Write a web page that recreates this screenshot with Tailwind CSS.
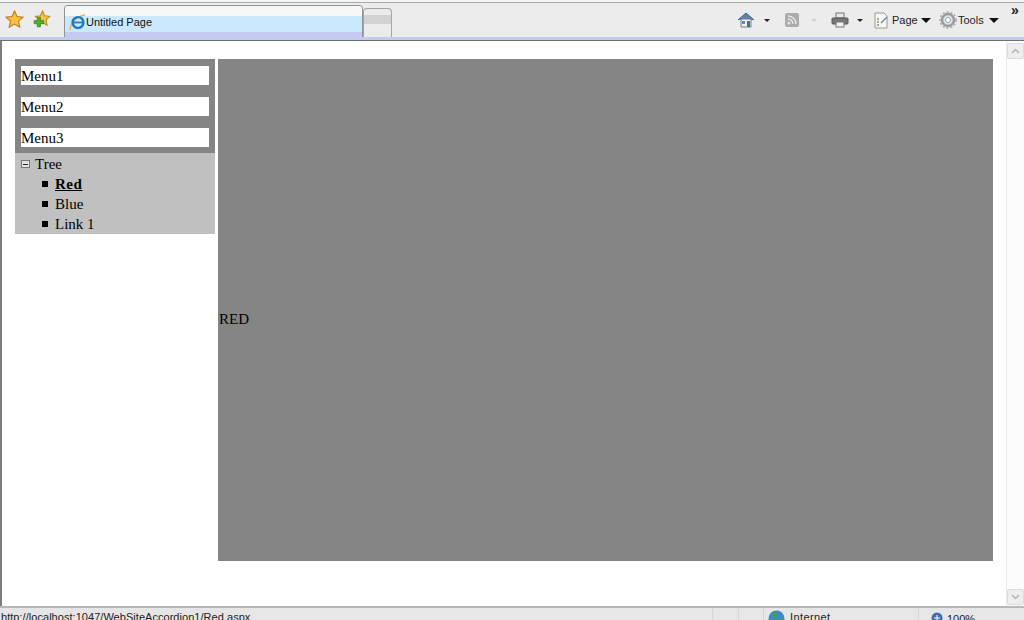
<!DOCTYPE html>
<html lang="en">
<head>
    <meta charset="UTF-8">
    <title>Untitled Page</title>
    <script src="https://cdn.jsdelivr.net/npm/@tailwindcss/browser@4"></script>
</head>
<body class="h-[620px] w-[1024px] overflow-hidden flex flex-col bg-white font-['Liberation_Serif',serif] text-black">

    <!-- browser toolbar -->
    <div class="h-[40px] shrink-0 flex flex-col bg-[#ececec]">
        <div class="h-[2px] bg-[#f4f4f4]"></div>
        <div class="h-[1px] bg-[#a8aca8]"></div>
        <div class="flex-1 flex items-end relative font-['Liberation_Sans',sans-serif] text-[11px]">
            <div class="flex items-center gap-[8px] pl-[5px] self-start mt-[7px] w-[64px]">
                <svg width="19" height="19" viewBox="0 0 18 18"><path d="M9 1l2.400 5.200 5.600.6-4.200 3.800 1.200 5.600L9 13.400l-5 2.800 1.200-5.600L1 6.800l5.600-.6z" fill="#f7c23c" stroke="#b9791c"/></svg>
                <svg width="19" height="19" viewBox="0 0 18 18"><path d="M10 1l2 4.500 5 .5-3.700 3.400 1 5-4.300-2.500-4 2.400 1-5L3.300 6l4.700-.5z" fill="#f2c548" stroke="#b9891c"/><path d="M5 7h3v3h3v3H8v3H5v-3H2v-3h3z" fill="#4fae2c" stroke="#2d7a18" stroke-width=".6"/></svg>
            </div>
            <div class="w-[299px] h-[32px] rounded-t-[4px] border border-b-0 border-[#8d9296] bg-white flex flex-col overflow-hidden">
                <div class="h-[10px] bg-[#f6f8f8]"></div>
                <div class="h-[16px] bg-[#cbe9fd] relative">
                    <span class="absolute left-[21px] top-[-2px] text-[11px] leading-[17px] text-[#101010]">Untitled Page</span>
                </div>
                <div class="flex-1 bg-[#c8c8f4]"></div>
            </div>
            <svg class="absolute left-[69px] top-[11px]" width="17" height="17" viewBox="0 0 17 17"><path d="M1 16C1 10 8 2 16 1" fill="none" stroke="#e8b040" stroke-width="1.400"/><circle cx="9" cy="8.500" r="5.400" fill="none" stroke="#1e78c8" stroke-width="2.400"/><path d="M4 8.500h10" stroke="#1e78c8" stroke-width="1.800"/></svg>
            <div class="w-[29px] h-[29px] rounded-t-[4px] border border-b-0 border-[#a3a6a6] bg-[#ebebeb] flex flex-col">
                <div class="mt-[6px] h-[9px] bg-[#d2d2d2]"></div>
            </div>
            <div class="ml-auto self-start mt-[8px] flex items-center text-[11px] text-[#222] pr-[4px] h-[18px]">
                <svg width="18" height="18" viewBox="0 0 18 18"><path d="M1 9l8-7 8 7" fill="#5a82b8" stroke="#3b5e94"/><path d="M4 8h10v8H4z" fill="#f2efe4" stroke="#7d7d70"/><path d="M10 10h3v6h-3z" fill="#3c70b0"/><path d="M5 10h3v3H5z" fill="#5b8cc4"/></svg>
                <span class="ml-[9px] border-x-[3px] border-t-[3px] border-x-transparent border-t-[#222]"></span>
                <svg class="ml-[15px]" width="14" height="14" viewBox="0 0 14 14"><rect width="14" height="14" rx="2" fill="#a9aca9"/><circle cx="4" cy="10" r="1.500" fill="#e6e6e6"/><path d="M3 6a5 5 0 015 5M3 3a8 8 0 018 8" fill="none" stroke="#e6e6e6" stroke-width="1.400"/></svg>
                <span class="ml-[12px] border-x-[3px] border-t-[3px] border-x-transparent border-t-[#d0d0d0]"></span>
                <svg class="ml-[14px]" width="18" height="16" viewBox="0 0 18 16"><rect x="5" y="1" width="8" height="5" fill="#e8e8e8" stroke="#777"/><rect x="1" y="6" width="16" height="6" rx="1" fill="#777" stroke="#555"/><rect x="5" y="10" width="8" height="5" fill="#f0f0f0" stroke="#777"/></svg>
                <span class="ml-[8px] border-x-[3px] border-t-[3px] border-x-transparent border-t-[#222]"></span>
                <svg class="ml-[10px]" width="17" height="17" viewBox="0 0 17 17"><path d="M2 1h9l3 3v12H2z" fill="#f7f7f2" stroke="#9a9a90"/><path d="M4 7h2M4 10h2M4 13h2" stroke="#555"/><path d="M8 11l6-6" stroke="#6a8aa8" stroke-width="1.500"/></svg>
                <span class="ml-[2px] w-[26px]">Page</span>
                <span class="ml-[3px] border-x-[5px] border-t-[5px] border-x-transparent border-t-[#111]"></span>
                <svg class="ml-[8px]" width="18" height="18" viewBox="0 0 18 18"><circle cx="9" cy="9" r="6" fill="#dde2e6" stroke="#999" stroke-width="2.400"/><circle cx="9" cy="9" r="8" fill="none" stroke="#aaa" stroke-width="1.600" stroke-dasharray="2 2"/><circle cx="9" cy="9" r="2.600" fill="#f2f5f7" stroke="#aab"/></svg>
                <span class="ml-[1px] w-[27px]">Tools</span>
                <span class="ml-[4px] border-x-[5px] border-t-[5px] border-x-transparent border-t-[#111]"></span>
                <span class="ml-[12px] mb-[20px] w-[9px] text-[14px] leading-none font-bold">»</span>
            </div>
        </div>
        <div class="h-[3px] bg-[#bdcdf0]"></div>
    </div>

    <!-- page area -->
    <div class="flex-1 flex min-h-0 border-t border-[#6f6f6f]">
        <div class="flex-1 flex items-start pt-[18px] pl-[13px] border-l-2 border-[#7c7c7c]">
            <div class="w-[200px] shrink-0 text-[15px]">
                <div class="bg-[#858585] px-[6px] pt-[7px] pb-[6px] flex flex-col gap-[12px] leading-[21px]">
                    <div class="bg-white h-[19px]">Menu1</div>
                    <div class="bg-white h-[19px]">Menu2</div>
                    <div class="bg-white h-[19px]">Menu3</div>
                </div>
                <div class="bg-[#c0c0c0] h-[81px] pt-[1px] leading-[20px]">
                    <div class="flex items-center pl-[6px]">
                        <span class="w-[9px] h-[8px] border border-[#777] bg-[#e4e4e4] flex items-center justify-center">
                            <span class="w-[5px] h-[1px] bg-[#222]"></span>
                        </span>
                        <span class="ml-[5px]">Tree</span>
                    </div>
                    <div class="flex items-center pl-[27px]"><span class="w-[6px] h-[6px] bg-black mr-[7px]"></span><span class="font-bold underline tracking-[0.5px]">Red</span></div>
                    <div class="flex items-center pl-[27px]"><span class="w-[6px] h-[6px] bg-black mr-[7px]"></span><span>Blue</span></div>
                    <div class="flex items-center pl-[27px]"><span class="w-[6px] h-[6px] bg-black mr-[7px]"></span><span>Link 1</span></div>
                </div>
            </div>
            <div class="ml-[3px] w-[775px] h-[502px] bg-[#858585] flex items-center pl-[1px] pt-[18px] text-[15px]">RED</div>
        </div>

        <!-- scrollbar -->
        <div class="w-[18px] shrink-0 bg-[#fcfcfc] border-l border-[#ececec] flex flex-col justify-between">
            <div class="h-[16px] mt-[2px] bg-[#eeeeee] border border-[#dcdcdc] rounded-[2px] flex items-center justify-center">
                <svg width="9" height="6" viewBox="0 0 9 6"><path d="M1 5l3.500-3.500L8 5" fill="none" stroke="#b4b4b4" stroke-width="1.500"/></svg>
            </div>
            <div class="h-[16px] mb-[1px] bg-[#eeeeee] border border-[#dcdcdc] rounded-[2px] flex items-center justify-center">
                <svg width="9" height="6" viewBox="0 0 9 6"><path d="M1 1l3.500 3.500L8 1" fill="none" stroke="#b4b4b4" stroke-width="1.500"/></svg>
            </div>
        </div>
    </div>

    <!-- status bar -->
    <div class="h-[14px] shrink-0 border-t-2 border-[#b8b8b8] bg-[#e6e6e6] flex font-['Liberation_Sans',sans-serif] text-[11px] leading-[14px] text-[#222] overflow-hidden relative">
        <span class="pl-[1px] pt-[2px] whitespace-nowrap tracking-[0.04px]">http://localhost:1047/WebSiteAccordion1/Red.aspx</span>
        <span class="absolute left-[712px] top-0 w-[1px] h-[12px] bg-[#d6d6d6]"></span>
        <span class="absolute left-[738px] top-0 w-[1px] h-[12px] bg-[#d6d6d6]"></span>
        <span class="absolute left-[763px] top-0 w-[1px] h-[12px] bg-[#d6d6d6]"></span>
        <span class="absolute left-[918px] top-0 w-[1px] h-[12px] bg-[#d6d6d6]"></span>
        <svg class="absolute left-[768px] top-[2px]" width="17" height="17" viewBox="0 0 17 17"><circle cx="8.500" cy="8.500" r="8" fill="#3c8ac8"/><path d="M3 4l5-2 2 3-3 3zM10 8l5 1-3 5z" fill="#46a04a"/></svg>
        <span class="absolute left-[790px] top-[2px] tracking-[0.4px]">Internet</span>
        <svg class="absolute left-[931px] top-[4px]" width="12" height="12" viewBox="0 0 12 12"><circle cx="6" cy="6" r="5.500" fill="#3c70b0"/><path d="M6 3v6M3 6h6" stroke="#fff"/></svg>
        <span class="absolute left-[947px] top-[4px]">100%</span>
    </div>

</body>
</html>
